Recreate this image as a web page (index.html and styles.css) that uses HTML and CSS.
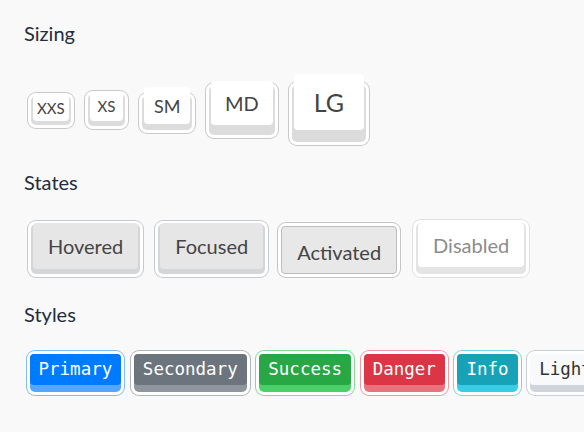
FILE: index.html
```html
<!DOCTYPE html>
<html lang="en">
<head>
<meta charset="utf-8">
<title>Keyboard keys</title>
<link rel="stylesheet" href="styles.css">
</head>
<body>
<section class="group group-sizing">
  <h2 class="title">Sizing</h2>
  <div class="row row-sizing">
    <span class="key key-xxs"><span class="face">XXS</span></span>
    <span class="key key-xs"><span class="face">XS</span></span>
    <span class="key key-sm"><span class="face">SM</span></span>
    <span class="key key-md"><span class="face">MD</span></span>
    <span class="key key-lg"><span class="face">LG</span></span>
  </div>
</section>
<section class="group group-states">
  <h2 class="title">States</h2>
  <div class="row row-states">
    <span class="key key-state is-hovered"><span class="face">Hovered</span></span>
    <span class="key key-state is-focused"><span class="face">Focused</span></span>
    <span class="key key-state is-active"><span class="face">Activated</span></span>
    <span class="key key-state is-disabled"><span class="face">Disabled</span></span>
  </div>
</section>
<section class="group group-styles">
  <h2 class="title">Styles</h2>
  <div class="row row-styles">
    <span class="key key-style primary"><span class="face">Primary</span></span>
    <span class="key key-style secondary"><span class="face">Secondary</span></span>
    <span class="key key-style success"><span class="face">Success</span></span>
    <span class="key key-style danger"><span class="face">Danger</span></span>
    <span class="key key-style info"><span class="face">Info</span></span>
    <span class="key key-style light"><span class="face">Light</span></span>
  </div>
</section>
</body>
</html>
```
FILE: styles.css
```css
html, body {
  margin: 0;
  background: #f9f9f9;
}

body {
  padding: 21px 24px 0;
  font-family: Lato, "Open Sans", sans-serif;
  color: #444;
  overflow: hidden;
}

.title {
  margin: 0;
  font-size: 20px;
  line-height: 24px;
  font-weight: 400;
  color: #1f2d3d;
}

.group + .group {
  margin-top: 24px;
}

.row {
  display: flex;
  flex-wrap: nowrap;
}

.row-sizing {
  margin-top: 29px;
  padding-left: 3px;
  align-items: center;
  gap: 9px;
}

.row-states {
  margin-top: 25px;
  padding-left: 3px;
  align-items: flex-end;
  gap: 10px;
}

.row-states .is-active {
  margin-left: 2px;
}

.row-states .is-disabled {
  margin-left: 5px;
}

.row-styles {
  margin-top: 24px;
  padding-left: 1.5px;
  align-items: center;
  gap: 4.6px;
}

/* a key = the cap body (bottom band colour); the face sits on it, lifted */
.key {
  --lift: 0px;
  --depth: 5px;
  --ring: #c9c9c9;
  --band: #dcdcdc;
  --face: #fff;
  --side: 2px;
  display: inline-flex;
  flex: none;
  margin: max(var(--lift), 4px) 4px 4px;
  padding: 0 var(--side) var(--depth);
  border-radius: 5px;
  background: var(--band);
  box-shadow: 0 0 0 3px #fff, 0 0 0 4px var(--ring);
  white-space: nowrap;
}

.face {
  display: block;
  margin-top: calc(-1 * var(--lift));
  background: var(--face);
  border-radius: 4px;
  color: #444;
}

/* sizing */
.key-xxs { --lift: 1px; --depth: 4px; }
.key-xxs .face { font-size: 15px; line-height: 18px; padding: 4px 4px; }

.key-xs { --lift: 2px; --depth: 5px; }
.key-xs .face { font-size: 15px; line-height: 18px; padding: 5px 8px 6px; }

.key-sm { --lift: 9px; --depth: 6px; }
.key-sm .face { font-size: 18px; line-height: 22px; padding: 8px 9.5px 7px; }

.key-md { --lift: 5px; --depth: 10px; }
.key-md .face { font-size: 20px; line-height: 24px; padding: 10px 14px; }

.key-lg { --lift: 11px; --depth: 12px; }
.key-lg .face { font-size: 25px; line-height: 30px; padding: 13px 20px; }

/* states */
.key-state {
  --ring: #c5cad0;
  --band: #d4d6d8;
  --face: #e6e6e6;
  --lift: 1px;
  --depth: 5px;
}
.key-state .face {
  font-size: 20px;
  line-height: 24px;
  padding: 11px 15px;
}

.key-state.is-active {
  --ring: #c4c4c4;
  --depth: 0px;
  --lift: 0px;
  --side: 0px;
  --band: #e8e8e8;
}
.key-state.is-active .face {
  border: 1px solid #bdbdbd;
  background: #e8e8e8;
  padding: 13px 15px 9px;
}

.key-state.is-disabled {
  --ring: #e0e0e0;
  --band: #e4e4e4;
  --face: #fff;
  --depth: 7px;
  --lift: 0px;
}
.key-state.is-disabled .face {
  color: #8c8c8c;
  padding: 10px 15px;
}

/* styles */
.key-style {
  --depth: 7px;
  --lift: 0px;
  --side: 0px;
}
.key-style .face {
  font-family: "DejaVu Sans Mono", "Liberation Mono", monospace;
  font-size: 17.5px;
  line-height: 21px;
  padding: 5px 9px;
  color: #fff;
}

.primary   { --face: #007bff; --band: #54a6ff; --ring: #80bcf5; }
.secondary { --face: #6c757d; --band: #8f969c; --ring: #b0b5ba; }
.success   { --face: #28a745; --band: #4bcf69; --ring: #86d996; }
.danger    { --face: #dc3545; --band: #e8737d; --ring: #ee9ca4; }
.info      { --face: #17a2b8; --band: #38cde5; --ring: #7dd4e2; }
.light     { --face: #f8f9fa; --band: #cfd5da; --ring: #c9ced3; }
.light .face { color: #333; }
```
